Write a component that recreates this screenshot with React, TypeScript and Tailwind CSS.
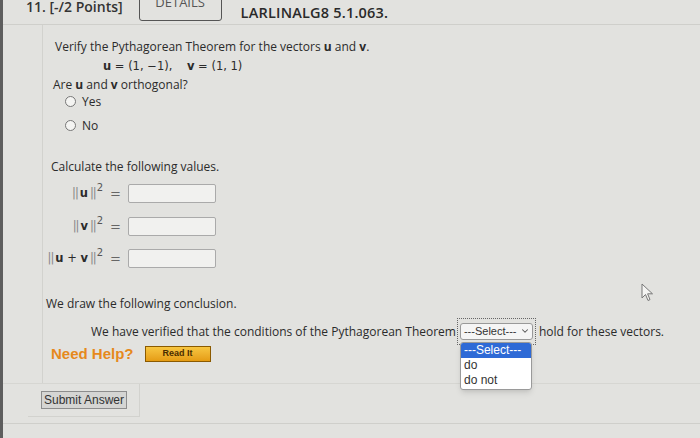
import { ChevronDown } from 'lucide-react'

const body = { fontFamily: '"Open Sans", "DejaVu Sans", sans-serif' }
const math = { fontFamily: '"DejaVu Sans", Verdana, sans-serif' }
const arial = { fontFamily: '"Liberation Sans", Arial, sans-serif' }

function Norm({ children }: { children: React.ReactNode }) {
  return (
    <span className="inline-flex items-start" style={math}>
      <span className="tracking-[-1px] text-[#888]">||</span>
      <span className="px-[2px]">{children}</span>
      <span className="tracking-[-1px] text-[#888]">||</span>
      <span className="-mt-[5px] ml-[1px] text-[10px] text-[#555]">2</span>
    </span>
  )
}

function AnswerBox() {
  return <div className="h-[19px] w-[88px] rounded-[2px] border border-[#aaa] bg-[#f1f1ef]" />
}

function Radio({ label }: { label: string }) {
  return (
    <label className="flex items-center gap-[6px]">
      <span className="h-[11px] w-[11px] rounded-full border border-[#777] bg-[#f4f4f2]" />
      <span>{label}</span>
    </label>
  )
}

export default function App() {
  return (
    <div
      className="relative h-[438px] w-[700px] overflow-hidden border-l-[3px] border-[#5e5e5e] bg-[#e2e2df] text-[12px] text-[#2b2b2b]"
      style={body}
    >
      <header className="flex h-[25px] items-start overflow-hidden border-b border-[#cfcfcb] pl-[23px]">
        <span className="-mt-[4px] text-[14px] font-semibold text-[#333]">11. [-/2 Points]</span>
        <div className="-mt-[10px] ml-[16px] flex h-[31px] w-[83px] items-end justify-center rounded-b-[3px] border-[1.5px] border-[#555] pb-[8px] text-[13px] text-[#555]">
          DETAILS
        </div>
        <span className="ml-[19px] mt-[2px] text-[14.5px] font-semibold tracking-[0.2px] text-[#2a2a2a]">
          LARLINALG8 5.1.063.
        </span>
      </header>

      <div className="ml-[39px] flex h-[358px] flex-col border-l border-[#d2d2ce] pl-[12px]">
        <p className="mt-[13px] leading-[17px]">
          Verify the Pythagorean Theorem for the vectors <b>u</b> and <b>v</b>.
        </p>
        <p className="ml-[48px] mt-[3px] text-[11.5px] leading-[17px]" style={math}>
          <b>u</b> = (1, −1),&nbsp;&nbsp;&nbsp; <b>v</b> = (1, 1)
        </p>
        <p className="-ml-[2px] mt-[1px] leading-[17px]">
          Are <b>u</b> and <b>v</b> orthogonal?
        </p>
        <div className="ml-[10px] flex flex-col gap-[7px] leading-[17px]">
          <Radio label="Yes" />
          <Radio label="No" />
        </div>

        <p className="-ml-[4px] mt-[24px] leading-[17px]">Calculate the following values.</p>
        <div className="-ml-[4px] mt-[9px] grid grid-cols-[77px_88px] items-center gap-y-[13px] text-[11.5px]">
          <div className="flex items-center justify-end gap-[7px] pr-[7px]">
            <Norm><b>u</b></Norm>
            <span className="text-[13px] text-[#666]" style={math}>=</span>
          </div>
          <AnswerBox />
          <div className="flex items-center justify-end gap-[7px] pr-[7px]">
            <Norm><b>v</b></Norm>
            <span className="text-[13px] text-[#666]" style={math}>=</span>
          </div>
          <AnswerBox />
          <div className="flex items-center justify-end gap-[7px] pr-[7px]">
            <Norm>
              <b>u</b>&nbsp;+&nbsp;<b>v</b>
            </Norm>
            <span className="text-[13px] text-[#666]" style={math}>=</span>
          </div>
          <AnswerBox />
        </div>

        <p className="-ml-[9px] mt-[26px] leading-[17px]">We draw the following conclusion.</p>
        <div className="ml-[36px] mt-[6px] flex items-center whitespace-nowrap leading-[17px]">
          <span>We have verified that the conditions of the Pythagorean Theorem</span>
          <div className="relative ml-[1px] border border-dotted border-[#666] px-[2px] py-[4px]">
            <div
              className="flex h-[17px] w-[73px] items-center justify-between rounded-[3px] border border-[#999] bg-[#f5f5f5] pl-[3px] pr-[2px] text-[11px] text-[#333]"
              style={arial}
            >
              ---Select---
              <ChevronDown size={10} strokeWidth={2.5} className="text-[#555]" />
            </div>
            <div
              className="absolute left-[2px] top-[23px] z-10 w-[72px] overflow-hidden rounded-[3px] border border-[#9a9a9a] bg-white text-[12px] leading-[13px] text-[#333] shadow-md"
              style={arial}
            >
              <div className="bg-[#2e6ad6] px-[3px] py-[1px] text-white">---Select---</div>
              <div className="px-[3px] py-[1px]">do</div>
              <div className="px-[3px] pb-[2px] pt-[1px]">do not</div>
            </div>
          </div>
          <span className="ml-[3px]">hold for these vectors.</span>
        </div>

        <div className="-ml-[4px] -mt-[2px] flex items-center gap-[11px]" style={arial}>
          <span className="text-[15px] font-bold text-[#e6891c]">Need Help?</span>
          <button className="flex h-[16px] w-[66px] items-center justify-center border border-[#8b5a00] bg-gradient-to-b from-[#f7c640] to-[#e59c12] text-[9px] font-bold text-[#4a2c00]">
            Read It
          </button>
        </div>
      </div>

      <div className="flex h-[40px] items-start border-t border-[#d6d6d2]">
        <div className="ml-[25px] flex h-[33px] w-[112px] items-center border-b border-r border-[#d2d2ce] pl-[13px]">
          <button
            className="flex h-[18px] w-[86px] items-center justify-center border border-[#8d8d8d] bg-[#d5d5d3] text-[12px] text-[#333]"
            style={arial}
          >
            Submit Answer
          </button>
        </div>
      </div>
      <div className="border-t border-[#cfcfcb]" />

      <svg className="absolute left-[638px] top-[283px]" width="14" height="20" viewBox="0 0 14 20">
        <path d="M1 1 L1 15 L4.5 11.5 L7 17.5 L9 16.6 L6.6 10.8 L11.5 10.8 Z" fill="#f4f4f2" stroke="#777" strokeWidth="1" />
      </svg>
    </div>
  )
}
